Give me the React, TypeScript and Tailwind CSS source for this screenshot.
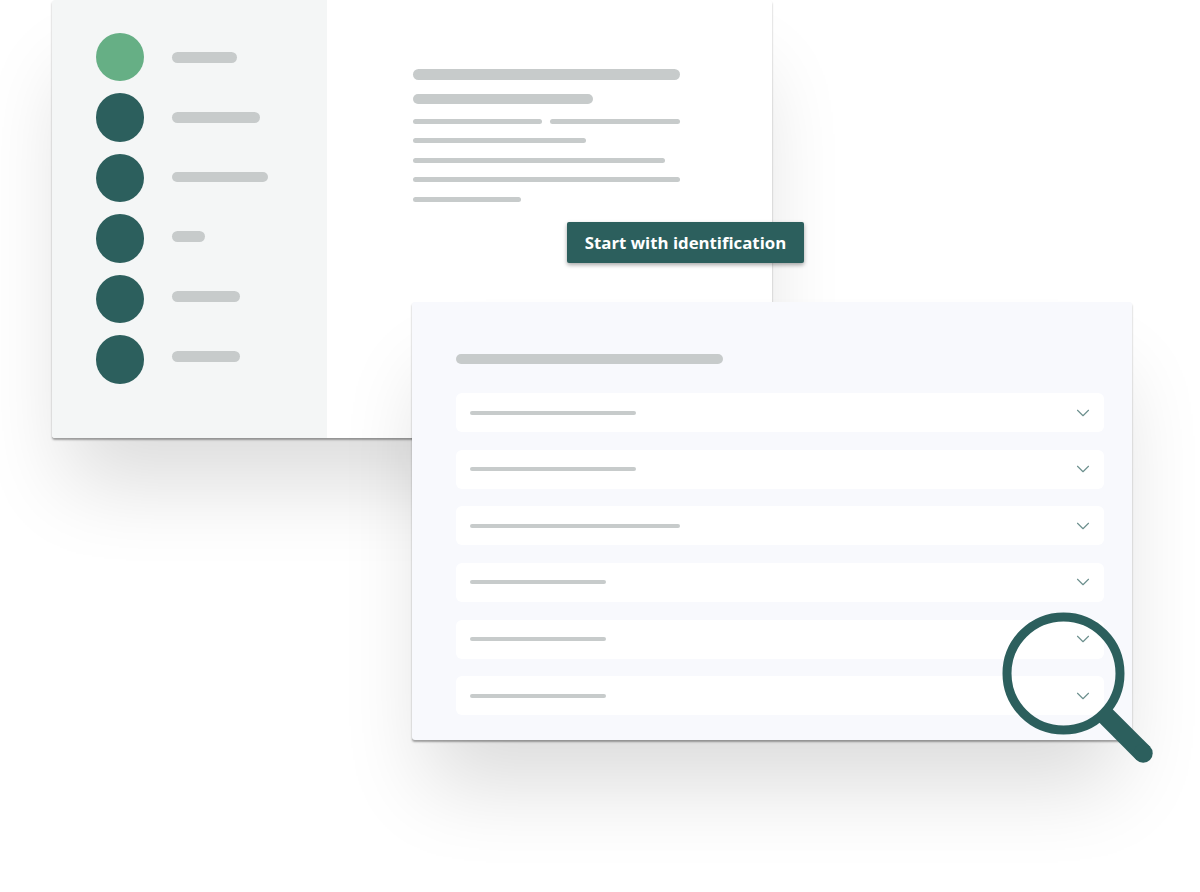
import { ChevronDown } from "lucide-react";

const steps = [
  { bar: "w-[65px] mt-[1px]", dot: "bg-[#66af85]" },
  { bar: "w-[88px]", dot: "bg-[#2c5f5d]" },
  { bar: "w-[96px] mb-[1.4px]", dot: "bg-[#2c5f5d]" },
  { bar: "w-[33px] mb-[3.6px]", dot: "bg-[#2c5f5d]" },
  { bar: "w-[68px] mb-[4.6px]", dot: "bg-[#2c5f5d]" },
  { bar: "w-[68px] mb-[5.6px]", dot: "bg-[#2c5f5d]" },
];

const rows = ["w-[166px]", "w-[166px]", "w-[210px]", "w-[136px]", "w-[136px]", "w-[136px]"];

function Line({ className }: { className: string }) {
  return <div className={`rounded-full bg-[#c7cbcb] ${className}`} />;
}

export default function App() {
  return (
    <div className="relative h-[892px] w-[1200px] overflow-hidden bg-white">
      {/* back window */}
      <div className="absolute left-[52px] top-0 flex h-[438px] w-[720px] rounded-[3px] bg-white shadow-[0_2px_2px_rgba(0,0,0,0.35),0_60px_80px_-15px_rgba(0,0,0,0.14)]">
        <div className="flex w-[275px] flex-col gap-[11.9px] rounded-l-[3px] bg-[#f4f6f6] pl-[43.7px] pt-[32.7px]">
          {steps.map((s, i) => (
            <div key={i} className="flex items-center gap-[28px]">
              <div className={`h-[48.6px] w-[48.6px] rounded-full ${s.dot}`} />
              <Line className={`h-[10.3px] ${s.bar}`} />
            </div>
          ))}
        </div>
        <div className="flex flex-col pl-[86px] pt-[69.3px]">
          <Line className="h-[10.3px] w-[267px]" />
          <Line className="mt-[14.4px] h-[10.3px] w-[180px]" />
          <div className="mt-[14.4px] flex gap-[7.6px]">
            <Line className="h-[5px] w-[129.4px]" />
            <Line className="h-[5px] w-[130px]" />
          </div>
          <Line className="mt-[14.5px] h-[5px] w-[173px]" />
          <Line className="mt-[14.5px] h-[5px] w-[252px]" />
          <Line className="mt-[14.5px] h-[5px] w-[267px]" />
          <Line className="mt-[14.5px] h-[5px] w-[108px]" />
        </div>
      </div>

      {/* front window */}
      <div className="absolute left-[412px] top-[302px] h-[438px] w-[720px] rounded-[3px] bg-[#f8f9fd] pl-[44px] pr-[28px] pt-[52px] shadow-[0_2px_2px_rgba(0,0,0,0.35),0_60px_80px_-15px_rgba(0,0,0,0.14)]">
        <Line className="h-[10px] w-[267px]" />
        <div className="mt-[29px] flex flex-col gap-[17.65px]">
          {rows.map((w, i) => (
            <div key={i} className="flex h-[39px] items-center justify-between rounded-[6px] bg-white pl-[14px] pr-[10px]">
              <Line className={`h-[4px] ${w}`} />
              <ChevronDown className="h-[22px] w-[22px] text-[#2c5f5d]/70" strokeWidth={1.2} />
            </div>
          ))}
        </div>
      </div>

      {/* call to action */}
      <div className="absolute left-[567px] top-[222px] flex h-[41px] w-[237px] items-center justify-center rounded-[2px] bg-[#2c5f5d] font-['Open_Sans',sans-serif] text-[16.8px] font-bold text-white shadow-[0_2px_4px_rgba(0,0,0,0.35)]">
        Start with identification
      </div>

      {/* magnifier */}
      <svg className="absolute left-[990px] top-[600px]" width="180" height="180" viewBox="0 0 180 180" fill="none">
        <circle cx="73.5" cy="73.5" r="56.5" stroke="#2c5f5d" strokeWidth="9" />
        <path d="M113.4 113.4L153.2 153.2" stroke="#2c5f5d" strokeWidth="19" />
        <circle cx="153.2" cy="153.2" r="9.5" fill="#2c5f5d" />
      </svg>
    </div>
  );
}
